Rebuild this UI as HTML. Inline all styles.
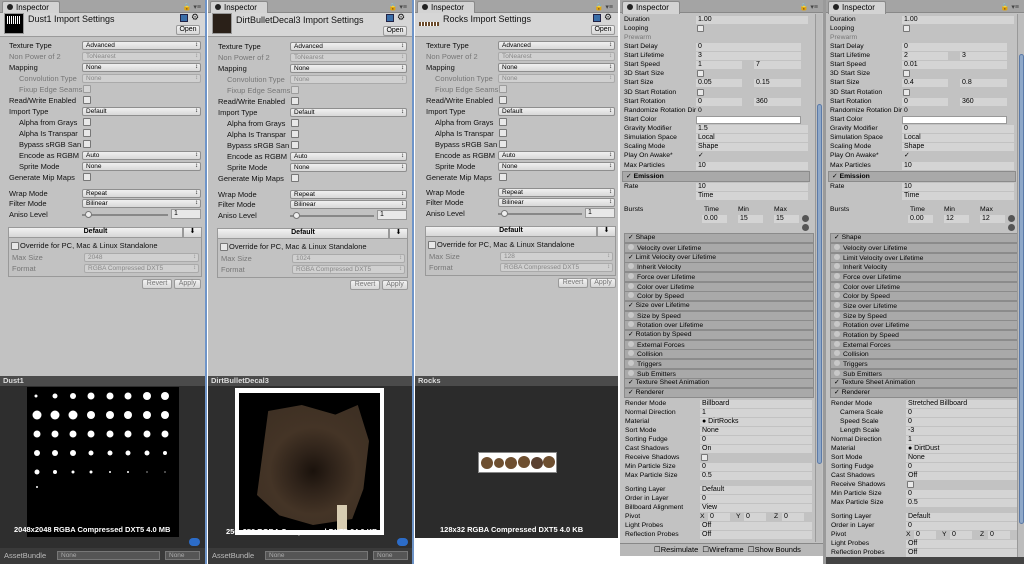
<!DOCTYPE html>
<html><head><meta charset="utf-8">
<style>
*{margin:0;padding:0;box-sizing:border-box}
body{width:1024px;height:564px;overflow:hidden;background:#fff;font-family:"Liberation Sans","DejaVu Sans",sans-serif;position:relative}
.p{position:absolute;top:0;height:564px;overflow:hidden;background:#c2c2c2}
.tb{position:absolute;left:0;top:0;right:0;height:13px;background:#a4a4a4;border-bottom:1px solid #888}
.tab{position:absolute;left:2px;top:1px;width:58px;height:13px;background:#d3d3d3;border:1px solid #8a8a8a;border-bottom:none;border-radius:2px 2px 0 0;font-size:8px;line-height:11px;padding-left:4px}
.tab b{display:inline-block;width:6px;height:6px;border-radius:50%;background:#222;margin-right:3px;vertical-align:-0px}
.lk{position:absolute;right:5px;top:3px;font-size:7px;color:#444}
.hd{position:absolute;left:0;right:0;top:13px;height:24px;background:#d6d6d6;border-bottom:1px solid #9a9a9a}
.l{position:absolute;font-size:7.5px;white-space:nowrap;color:#111;line-height:9px}
.g{color:#777}
.dd{position:absolute;height:9px;background:linear-gradient(#f0f0f0,#d8d8d8);border:1px solid #8e8e8e;border-radius:2px;font-size:6.5px;line-height:7px;padding-left:3px;white-space:nowrap}
.dd:after{content:"\2195";position:absolute;right:2px;top:0;font-size:6px}
.dg{color:#888;background:#d0d0d0;border-color:#aaa}
.cb{position:absolute;width:8px;height:8px;background:#e8e8e8;border:1px solid #777;border-radius:1px}
.f{position:absolute;height:8px;background:#d4d4d4;font-size:7px;line-height:8px;padding-left:2px;white-space:nowrap}
.btn{position:absolute;height:10px;background:linear-gradient(#f2f2f2,#d6d6d6);border:1px solid #999;border-radius:2px;font-size:7px;line-height:8px;text-align:center}
.ph{position:absolute;left:0;right:0;top:376px;height:10px;background:#4b4b4b;color:#ddd;font-size:7.5px;font-weight:bold;line-height:10px;padding-left:3px}
.pv{position:absolute;left:0;right:0;top:386px;height:162px;background:#2e2e2e}
.ab{position:absolute;left:0;right:0;top:548px;height:16px;background:#3a3a3a;color:#bbb;font-size:7.5px;line-height:16px;padding-left:4px}
.abd{position:absolute;top:551px;height:9px;background:#555;border:1px solid #777;color:#aaa;font-size:6.5px;line-height:7px;padding-left:3px}
.cap{position:absolute;color:#fff;font-size:7.5px;font-weight:bold;white-space:nowrap}
.r{position:absolute;left:0;font-size:6.8px;line-height:8px;white-space:nowrap}
.m{position:absolute;left:4px;width:190px;height:10px;background:#a9a9a9;border:1px solid #8b8b8b;font-size:6.8px;line-height:8px;padding-left:3px;white-space:nowrap}
.m i{display:inline-block;width:6px;height:6px;border-radius:50%;background:#c8c8c8;margin-right:3px;font-style:normal}
.sb{position:absolute;width:7px;background:#bdbdbd;border-left:1px solid #999}
.th{position:absolute;left:1px;width:5px;background:#8fa8c8;border-radius:3px;border:1px solid #5b7aa8}
.blu{position:absolute;top:0;height:564px;width:2px;background:#6e94c8}
</style></head><body>

<!-- PANEL 1 -->
<div class="p" style="left:0;width:206px">
<div class="tb"><div class="tab"><b></b>Inspector</div><div class="lk">🔒 ▾≡</div></div>
<div class="hd"><div style="position:absolute;left:4px;top:0;width:20px;height:21px;background:#000;border:1px solid #999"><div style="margin:2px;height:8px;background:repeating-linear-gradient(90deg,#fff 0 1px,#000 1px 2px)"></div></div>
<div class="l" style="left:28px;top:1px;font-size:9px;line-height:11px">Dust1 Import Settings</div>
<div style="position:absolute;left:180px;top:1px;width:8px;height:8px;background:#3a6ea8;border:1px solid #224"></div><div class="l" style="left:191px;top:0;font-size:9px">⚙</div>
<div class="btn" style="left:176px;top:12px;width:24px">Open</div></div>
<div class="l" style="left:9px;top:41px">Texture Type</div><div class="dd" style="left:82px;top:41px;width:119px">Advanced</div>
<div class="l g" style="left:9px;top:52px">Non Power of 2</div><div class="dd dg" style="left:82px;top:52px;width:119px">ToNearest</div>
<div class="l" style="left:9px;top:63px">Mapping</div><div class="dd" style="left:82px;top:63px;width:119px">None</div>
<div class="l g" style="left:19px;top:74px">Convolution Type</div><div class="dd dg" style="left:82px;top:74px;width:119px">None</div>
<div class="l g" style="left:19px;top:85px">Fixup Edge Seams</div><div class="cb" style="left:83px;top:85px;opacity:.5"></div>
<div class="l" style="left:9px;top:96px">Read/Write Enabled</div><div class="cb" style="left:83px;top:96px"></div>
<div class="l" style="left:9px;top:107px">Import Type</div><div class="dd" style="left:82px;top:107px;width:119px">Default</div>
<div class="l" style="left:19px;top:118px">Alpha from Grays</div><div class="cb" style="left:83px;top:118px"></div>
<div class="l" style="left:19px;top:129px">Alpha Is Transpar</div><div class="cb" style="left:83px;top:129px"></div>
<div class="l" style="left:19px;top:140px">Bypass sRGB San</div><div class="cb" style="left:83px;top:140px"></div>
<div class="l" style="left:19px;top:151px">Encode as RGBM</div><div class="dd" style="left:82px;top:151px;width:119px">Auto</div>
<div class="l" style="left:19px;top:162px">Sprite Mode</div><div class="dd" style="left:82px;top:162px;width:119px">None</div>
<div class="l" style="left:9px;top:173px">Generate Mip Maps</div><div class="cb" style="left:83px;top:173px"></div>
<div class="l" style="left:9px;top:189px">Wrap Mode</div><div class="dd" style="left:82px;top:189px;width:119px">Repeat</div>
<div class="l" style="left:9px;top:199px">Filter Mode</div><div class="dd" style="left:82px;top:199px;width:119px">Bilinear</div>
<div class="l" style="left:9px;top:210px">Aniso Level</div><div style="position:absolute;left:82px;top:214px;width:86px;height:2px;background:#888"></div><div style="position:absolute;left:85px;top:211px;width:7px;height:7px;border-radius:50%;background:#eee;border:1px solid #777"></div><div class="f" style="left:171px;top:209px;width:30px;background:#e8e8e8;border:1px solid #999;height:10px">1</div>
<div style="position:absolute;left:8px;top:227px;width:194px;height:50px;border:1px solid #999"></div>
<div class="btn" style="left:8px;top:227px;width:175px;height:11px;border-radius:0;font-weight:bold">Default</div><div class="btn" style="left:183px;top:227px;width:19px;height:11px;border-radius:0">⬇</div>
<div class="cb" style="left:11px;top:242px"></div><div class="l" style="left:20px;top:241px">Override for PC, Mac &amp; Linux Standalone</div>
<div class="l g" style="left:12px;top:253px">Max Size</div><div class="dd dg" style="left:84px;top:253px;width:115px">2048</div>
<div class="l g" style="left:12px;top:264px">Format</div><div class="dd dg" style="left:84px;top:264px;width:115px">RGBA Compressed DXT5</div>
<div class="btn" style="left:142px;top:279px;width:30px;color:#777">Revert</div><div class="btn" style="left:174px;top:279px;width:27px;color:#777">Apply</div>
<div class="ph">Dust1</div>
<div class="pv"><div style="position:absolute;left:27px;top:1px;width:152px;height:150px;background:#000">
<svg width="152" height="150" fill="#fff">
<g><circle cx="9" cy="9" r="1.5"/><circle cx="28" cy="9" r="2.5"/><circle cx="46" cy="9" r="3"/><circle cx="64" cy="9" r="3.5"/><circle cx="83" cy="9" r="3.5"/><circle cx="101" cy="9" r="3.5"/><circle cx="120" cy="9" r="4"/><circle cx="138" cy="9" r="4"/></g>
<g><circle cx="10" cy="28" r="4.5"/><circle cx="28" cy="28" r="4.5"/><circle cx="46" cy="28" r="4.5"/><circle cx="64" cy="28" r="4"/><circle cx="83" cy="28" r="4"/><circle cx="101" cy="28" r="4"/><circle cx="120" cy="28" r="4"/><circle cx="138" cy="28" r="4"/></g>
<g><circle cx="10" cy="47" r="3.5"/><circle cx="28" cy="47" r="3.5"/><circle cx="46" cy="47" r="3.5"/><circle cx="64" cy="47" r="3.5"/><circle cx="83" cy="47" r="3.5"/><circle cx="101" cy="47" r="3.5"/><circle cx="120" cy="47" r="3.5"/><circle cx="138" cy="47" r="3.5"/></g>
<g><circle cx="10" cy="66" r="3"/><circle cx="28" cy="66" r="3"/><circle cx="46" cy="66" r="3"/><circle cx="64" cy="66" r="2.5"/><circle cx="83" cy="66" r="2.5"/><circle cx="101" cy="66" r="2.5"/><circle cx="120" cy="66" r="2.5"/><circle cx="138" cy="66" r="2"/></g>
<g><circle cx="10" cy="85" r="2.5"/><circle cx="28" cy="85" r="2"/><circle cx="46" cy="85" r="1.5"/><circle cx="64" cy="85" r="1.5"/><circle cx="83" cy="85" r="1"/><circle cx="101" cy="85" r="1"/><circle cx="120" cy="85" r="0.6"/><circle cx="138" cy="85" r="0.6"/><circle cx="10" cy="100" r="1"/></g>
</svg></div>
<div class="cap" style="left:14px;top:139px">2048x2048  RGBA Compressed DXT5    4.0 MB</div>
<div style="position:absolute;left:189px;top:152px;width:11px;height:8px;border-radius:4px;background:#2c6cc8"></div></div>
<div class="ab">AssetBundle</div><div class="abd" style="left:57px;width:103px">None</div><div class="abd" style="left:165px;width:35px">None</div>
</div>
<div class="blu" style="left:205px"></div>

<!-- PANEL 2 -->
<div class="p" style="left:208px;width:204px">
<div class="tb"><div class="tab"><b></b>Inspector</div><div class="lk">🔒 ▾≡</div></div>
<div class="hd"><div style="position:absolute;left:4px;top:0;width:20px;height:21px;background:#2a2018;border:1px solid #999"></div>
<div class="l" style="left:28px;top:2px;font-size:9px;line-height:11px">DirtBulletDecal3 Import Settings</div>
<div style="position:absolute;left:178px;top:1px;width:8px;height:8px;background:#3a6ea8;border:1px solid #224"></div><div class="l" style="left:189px;top:0;font-size:9px">⚙</div>
<div class="btn" style="left:175px;top:13px;width:24px">Open</div></div>
<div class="l" style="left:10px;top:42px">Texture Type</div><div class="dd" style="left:82px;top:42px;width:117px">Advanced</div>
<div class="l g" style="left:10px;top:53px">Non Power of 2</div><div class="dd dg" style="left:82px;top:53px;width:117px">ToNearest</div>
<div class="l" style="left:10px;top:64px">Mapping</div><div class="dd" style="left:82px;top:64px;width:117px">None</div>
<div class="l g" style="left:19px;top:75px">Convolution Type</div><div class="dd dg" style="left:82px;top:75px;width:117px">None</div>
<div class="l g" style="left:19px;top:86px">Fixup Edge Seams</div><div class="cb" style="left:83px;top:86px;opacity:.5"></div>
<div class="l" style="left:10px;top:97px">Read/Write Enabled</div><div class="cb" style="left:83px;top:97px"></div>
<div class="l" style="left:10px;top:108px">Import Type</div><div class="dd" style="left:82px;top:108px;width:117px">Default</div>
<div class="l" style="left:19px;top:119px">Alpha from Grays</div><div class="cb" style="left:83px;top:119px"></div>
<div class="l" style="left:19px;top:130px">Alpha Is Transpar</div><div class="cb" style="left:83px;top:130px"></div>
<div class="l" style="left:19px;top:141px">Bypass sRGB San</div><div class="cb" style="left:83px;top:141px"></div>
<div class="l" style="left:19px;top:152px">Encode as RGBM</div><div class="dd" style="left:82px;top:152px;width:117px">Auto</div>
<div class="l" style="left:19px;top:163px">Sprite Mode</div><div class="dd" style="left:82px;top:163px;width:117px">None</div>
<div class="l" style="left:10px;top:174px">Generate Mip Maps</div><div class="cb" style="left:83px;top:174px"></div>
<div class="l" style="left:10px;top:190px">Wrap Mode</div><div class="dd" style="left:82px;top:190px;width:117px">Repeat</div>
<div class="l" style="left:10px;top:200px">Filter Mode</div><div class="dd" style="left:82px;top:200px;width:117px">Bilinear</div>
<div class="l" style="left:10px;top:211px">Aniso Level</div><div style="position:absolute;left:82px;top:215px;width:84px;height:2px;background:#888"></div><div style="position:absolute;left:85px;top:212px;width:7px;height:7px;border-radius:50%;background:#eee;border:1px solid #777"></div><div class="f" style="left:169px;top:210px;width:30px;background:#e8e8e8;border:1px solid #999;height:10px">1</div>
<div style="position:absolute;left:9px;top:228px;width:191px;height:50px;border:1px solid #999"></div>
<div class="btn" style="left:9px;top:228px;width:172px;height:11px;border-radius:0;font-weight:bold">Default</div><div class="btn" style="left:181px;top:228px;width:19px;height:11px;border-radius:0">⬇</div>
<div class="cb" style="left:12px;top:243px"></div><div class="l" style="left:21px;top:242px">Override for PC, Mac &amp; Linux Standalone</div>
<div class="l g" style="left:13px;top:254px">Max Size</div><div class="dd dg" style="left:84px;top:254px;width:113px">1024</div>
<div class="l g" style="left:13px;top:265px">Format</div><div class="dd dg" style="left:84px;top:265px;width:113px">RGBA Compressed DXT5</div>
<div class="btn" style="left:142px;top:280px;width:30px;color:#777">Revert</div><div class="btn" style="left:174px;top:280px;width:26px;color:#777">Apply</div>
<div class="ph">DirtBulletDecal3</div>
<div class="pv"><div style="position:absolute;left:27px;top:2px;width:149px;height:147px;background:#fff"><div style="position:absolute;left:4px;top:5px;width:141px;height:137px;background:#000"><div style="position:absolute;left:18px;top:12px;width:112px;height:120px;background:radial-gradient(circle at 50% 55%,#1a120c 0,#2e2219 22%,#443426 50%,#3b2e22 100%);clip-path:polygon(10% 5%,40% 0,70% 8%,90% 0,100% 30%,95% 70%,85% 95%,50% 100%,20% 92%,0 75%,5% 40%)"></div><div style="position:absolute;left:98px;top:112px;width:10px;height:25px;background:#d8cdb2"></div></div></div>
<div class="cap" style="left:18px;top:141px">256x256  RGBA Compressed DXT5    64.0 KB</div>
<div style="position:absolute;left:189px;top:152px;width:11px;height:8px;border-radius:4px;background:#2c6cc8"></div></div>
<div class="ab">AssetBundle</div><div class="abd" style="left:57px;width:103px">None</div><div class="abd" style="left:165px;width:35px">None</div>
</div>
<div class="blu" style="left:412px"></div>

<!-- PANEL 3 -->
<div class="p" style="left:415px;width:203px;height:538px">
<div class="tb"><div class="tab"><b></b>Inspector</div><div class="lk">🔒 ▾≡</div></div>
<div class="hd"><div style="position:absolute;left:4px;top:9px;width:20px;height:4px;background:repeating-linear-gradient(90deg,#6b4a2a 0 2px,#fff 2px 3px)"></div>
<div class="l" style="left:28px;top:1px;font-size:9px;line-height:11px">Rocks Import Settings</div>
<div style="position:absolute;left:178px;top:1px;width:8px;height:8px;background:#3a6ea8;border:1px solid #224"></div><div class="l" style="left:189px;top:0;font-size:9px">⚙</div>
<div class="btn" style="left:176px;top:12px;width:24px">Open</div></div>
<div class="l" style="left:11px;top:41px">Texture Type</div><div class="dd" style="left:83px;top:41px;width:117px">Advanced</div>
<div class="l g" style="left:11px;top:52px">Non Power of 2</div><div class="dd dg" style="left:83px;top:52px;width:117px">ToNearest</div>
<div class="l" style="left:11px;top:63px">Mapping</div><div class="dd" style="left:83px;top:63px;width:117px">None</div>
<div class="l g" style="left:20px;top:74px">Convolution Type</div><div class="dd dg" style="left:83px;top:74px;width:117px">None</div>
<div class="l g" style="left:20px;top:85px">Fixup Edge Seams</div><div class="cb" style="left:84px;top:85px;opacity:.5"></div>
<div class="l" style="left:11px;top:96px">Read/Write Enabled</div><div class="cb" style="left:84px;top:96px"></div>
<div class="l" style="left:11px;top:107px">Import Type</div><div class="dd" style="left:83px;top:107px;width:117px">Default</div>
<div class="l" style="left:20px;top:118px">Alpha from Grays</div><div class="cb" style="left:84px;top:118px"></div>
<div class="l" style="left:20px;top:129px">Alpha Is Transpar</div><div class="cb" style="left:84px;top:129px"></div>
<div class="l" style="left:20px;top:140px">Bypass sRGB San</div><div class="cb" style="left:84px;top:140px"></div>
<div class="l" style="left:20px;top:151px">Encode as RGBM</div><div class="dd" style="left:83px;top:151px;width:117px">Auto</div>
<div class="l" style="left:20px;top:162px">Sprite Mode</div><div class="dd" style="left:83px;top:162px;width:117px">None</div>
<div class="l" style="left:11px;top:173px">Generate Mip Maps</div><div class="cb" style="left:84px;top:173px"></div>
<div class="l" style="left:11px;top:188px">Wrap Mode</div><div class="dd" style="left:83px;top:188px;width:117px">Repeat</div>
<div class="l" style="left:11px;top:198px">Filter Mode</div><div class="dd" style="left:83px;top:198px;width:117px">Bilinear</div>
<div class="l" style="left:11px;top:209px">Aniso Level</div><div style="position:absolute;left:83px;top:213px;width:84px;height:2px;background:#888"></div><div style="position:absolute;left:86px;top:210px;width:7px;height:7px;border-radius:50%;background:#eee;border:1px solid #777"></div><div class="f" style="left:170px;top:208px;width:30px;background:#e8e8e8;border:1px solid #999;height:10px">1</div>
<div style="position:absolute;left:10px;top:226px;width:191px;height:50px;border:1px solid #999"></div>
<div class="btn" style="left:10px;top:226px;width:172px;height:11px;border-radius:0;font-weight:bold">Default</div><div class="btn" style="left:182px;top:226px;width:19px;height:11px;border-radius:0">⬇</div>
<div class="cb" style="left:13px;top:241px"></div><div class="l" style="left:22px;top:240px">Override for PC, Mac &amp; Linux Standalone</div>
<div class="l g" style="left:14px;top:252px">Max Size</div><div class="dd dg" style="left:85px;top:252px;width:113px">128</div>
<div class="l g" style="left:14px;top:263px">Format</div><div class="dd dg" style="left:85px;top:263px;width:113px">RGBA Compressed DXT5</div>
<div class="btn" style="left:143px;top:278px;width:30px;color:#777">Revert</div><div class="btn" style="left:175px;top:278px;width:26px;color:#777">Apply</div>
<div class="ph">Rocks</div>
<div class="pv" style="height:152px;background:#2b2b2b"><div style="position:absolute;left:63px;top:66px;width:79px;height:21px;background:#fff;border:1px solid #888">
<svg width="77" height="19"><g fill="#6e4f30"><circle cx="8" cy="10" r="6"/><circle cx="20" cy="10" r="5"/><circle cx="32" cy="10" r="6"/><circle cx="45" cy="9" r="6"/><circle cx="58" cy="10" r="6" fill="#5a4030"/><circle cx="70" cy="9" r="6"/></g></svg></div>
<div class="cap" style="left:25px;top:139px">128x32  RGBA Compressed DXT5    4.0 KB</div></div>
</div>

<!-- PANEL 4 particle -->
<div class="p" style="left:620px;width:203px;height:556px">
<div class="tb"><div class="tab"><b></b>Inspector</div><div class="lk">🔒 ▾≡</div></div>
<div style="position:absolute;left:4px;top:15px;width:186px;height:541px">
<div class="r" style="top:1px">Duration</div><div class="f" style="left:72px;top:1px;width:112px">1.00</div>
<div class="r" style="top:10px">Looping</div><div class="cb" style="left:73px;top:10px;width:7px;height:7px"></div>
<div class="r g" style="top:19px">Prewarm</div>
<div class="r" style="top:28px">Start Delay</div><div class="f" style="left:72px;top:28px;width:105px">0</div>
<div class="r" style="top:37px">Start Lifetime</div><div class="f" style="left:72px;top:37px;width:105px">3</div>
<div class="r" style="top:46px">Start Speed</div><div class="f" style="left:72px;top:46px;width:46px">1</div><div class="f" style="left:130px;top:46px;width:47px">7</div>
<div class="r" style="top:55px">3D Start Size</div><div class="cb" style="left:73px;top:55px;width:7px;height:7px"></div>
<div class="r" style="top:64px">Start Size</div><div class="f" style="left:72px;top:64px;width:46px">0.05</div><div class="f" style="left:130px;top:64px;width:47px">0.15</div>
<div class="r" style="top:74px">3D Start Rotation</div><div class="cb" style="left:73px;top:74px;width:7px;height:7px"></div>
<div class="r" style="top:83px">Start Rotation</div><div class="f" style="left:72px;top:83px;width:46px">0</div><div class="f" style="left:130px;top:83px;width:47px">360</div>
<div class="r" style="top:92px">Randomize Rotation Dir 0</div>
<div class="r" style="top:101px">Start Color</div><div class="f" style="left:72px;top:101px;width:105px;background:#fff;border:1px solid #999"></div>
<div class="r" style="top:110px">Gravity Modifier</div><div class="f" style="left:72px;top:110px;width:112px">1.5</div>
<div class="r" style="top:119px">Simulation Space</div><div class="f" style="left:72px;top:119px;width:112px">Local</div>
<div class="r" style="top:128px">Scaling Mode</div><div class="f" style="left:72px;top:128px;width:112px">Shape</div>
<div class="r" style="top:137px">Play On Awake*</div><div class="r" style="left:74px;top:137px">✓</div>
<div class="r" style="top:147px">Max Particles</div><div class="f" style="left:72px;top:147px;width:112px">10</div>
<div class="m" style="left:-2px;top:156px;width:188px;height:11px;line-height:9px;font-weight:bold">✓ Emission</div>
<div class="r" style="top:168px">Rate</div><div class="f" style="left:72px;top:168px;width:112px">10</div>
<div class="f" style="left:72px;top:177px;width:112px">Time</div>
<div class="r" style="top:191px">Bursts</div><div class="r" style="left:80px;top:191px">Time</div><div class="r" style="left:114px;top:191px">Min</div><div class="r" style="left:150px;top:191px">Max</div>
<div class="f" style="left:78px;top:200px;width:25px">0.00</div><div class="f" style="left:114px;top:200px;width:25px">15</div><div class="f" style="left:150px;top:200px;width:25px">15</div>
<div style="position:absolute;left:178px;top:200px;width:7px;height:7px;border-radius:50%;background:#555"></div><div style="position:absolute;left:178px;top:209px;width:7px;height:7px;border-radius:50%;background:#555"></div>
</div>
<div class="m" style="top:233px"><span>✓ </span>Shape</div>
<div class="m" style="top:243px"><i></i>Velocity over Lifetime</div>
<div class="m" style="top:253px">✓ Limit Velocity over Lifetime</div>
<div class="m" style="top:262px"><i></i>Inherit Velocity</div>
<div class="m" style="top:272px"><i></i>Force over Lifetime</div>
<div class="m" style="top:282px"><i></i>Color over Lifetime</div>
<div class="m" style="top:291px"><i></i>Color by Speed</div>
<div class="m" style="top:301px">✓ Size over Lifetime</div>
<div class="m" style="top:311px"><i></i>Size by Speed</div>
<div class="m" style="top:320px"><i></i>Rotation over Lifetime</div>
<div class="m" style="top:330px">✓ Rotation by Speed</div>
<div class="m" style="top:340px"><i></i>External Forces</div>
<div class="m" style="top:349px"><i></i>Collision</div>
<div class="m" style="top:359px"><i></i>Triggers</div>
<div class="m" style="top:369px"><i></i>Sub Emitters</div>
<div class="m" style="top:378px">✓ Texture Sheet Animation</div>
<div class="m" style="top:388px">✓ Renderer</div>
<div style="position:absolute;left:4px;top:398px;width:190px">
<div class="r" style="left:1px;top:2px">Render Mode</div><div class="f" style="left:76px;top:2px;width:112px">Billboard</div>
<div class="r" style="left:1px;top:11px">Normal Direction</div><div class="f" style="left:76px;top:11px;width:112px">1</div>
<div class="r" style="left:1px;top:20px">Material</div><div class="f" style="left:76px;top:20px;width:112px">● DirtRocks</div>
<div class="r" style="left:1px;top:29px">Sort Mode</div><div class="f" style="left:76px;top:29px;width:112px">None</div>
<div class="r" style="left:1px;top:38px">Sorting Fudge</div><div class="f" style="left:76px;top:38px;width:112px">0</div>
<div class="r" style="left:1px;top:47px">Cast Shadows</div><div class="f" style="left:76px;top:47px;width:112px">On</div>
<div class="r" style="left:1px;top:56px">Receive Shadows</div><div class="cb" style="left:77px;top:56px;width:7px;height:7px"></div>
<div class="r" style="left:1px;top:65px">Min Particle Size</div><div class="f" style="left:76px;top:65px;width:112px">0</div>
<div class="r" style="left:1px;top:74px">Max Particle Size</div><div class="f" style="left:76px;top:74px;width:112px">0.5</div>
<div class="r" style="left:1px;top:88px">Sorting Layer</div><div class="f" style="left:76px;top:88px;width:112px">Default</div>
<div class="r" style="left:1px;top:97px">Order in Layer</div><div class="f" style="left:76px;top:97px;width:112px">0</div>
<div class="r" style="left:1px;top:106px">Billboard Alignment</div><div class="f" style="left:76px;top:106px;width:112px">View</div>
<div class="r" style="left:1px;top:115px">Pivot</div><div class="r" style="left:76px;top:115px">X</div><div class="f" style="left:84px;top:115px;width:22px">0</div><div class="r" style="left:112px;top:115px">Y</div><div class="f" style="left:120px;top:115px;width:22px">0</div><div class="r" style="left:150px;top:115px">Z</div><div class="f" style="left:158px;top:115px;width:22px">0</div>
<div class="r" style="left:1px;top:124px">Light Probes</div><div class="f" style="left:76px;top:124px;width:112px">Off</div>
<div class="r" style="left:1px;top:133px">Reflection Probes</div><div class="f" style="left:76px;top:133px;width:112px">Off</div>
</div>
<div style="position:absolute;left:0;top:543px;width:203px;height:13px;background:#b8b8b8;border-top:1px solid #888;font-size:7.5px;line-height:12px;white-space:nowrap;padding-left:34px">☐Resimulate &nbsp;☐Wireframe &nbsp;☐Show Bounds</div>
<div class="sb" style="left:195px;top:14px;height:528px"><div class="th" style="top:90px;height:360px"></div></div>
</div>

<!-- PANEL 5 particle -->
<div class="p" style="left:826px;width:198px">
<div class="tb"><div class="tab"><b></b>Inspector</div><div class="lk">🔒 ▾≡</div></div>
<div style="position:absolute;left:4px;top:15px;width:186px;height:541px">
<div class="r" style="top:1px">Duration</div><div class="f" style="left:72px;top:1px;width:112px">1.00</div>
<div class="r" style="top:10px">Looping</div><div class="cb" style="left:73px;top:10px;width:7px;height:7px"></div>
<div class="r g" style="top:19px">Prewarm</div>
<div class="r" style="top:28px">Start Delay</div><div class="f" style="left:72px;top:28px;width:105px">0</div>
<div class="r" style="top:37px">Start Lifetime</div><div class="f" style="left:72px;top:37px;width:46px">2</div><div class="f" style="left:130px;top:37px;width:47px">3</div>
<div class="r" style="top:46px">Start Speed</div><div class="f" style="left:72px;top:46px;width:105px">0.01</div>
<div class="r" style="top:55px">3D Start Size</div><div class="cb" style="left:73px;top:55px;width:7px;height:7px"></div>
<div class="r" style="top:64px">Start Size</div><div class="f" style="left:72px;top:64px;width:46px">0.4</div><div class="f" style="left:130px;top:64px;width:47px">0.8</div>
<div class="r" style="top:74px">3D Start Rotation</div><div class="cb" style="left:73px;top:74px;width:7px;height:7px"></div>
<div class="r" style="top:83px">Start Rotation</div><div class="f" style="left:72px;top:83px;width:46px">0</div><div class="f" style="left:130px;top:83px;width:47px">360</div>
<div class="r" style="top:92px">Randomize Rotation Dir 0</div>
<div class="r" style="top:101px">Start Color</div><div class="f" style="left:72px;top:101px;width:105px;background:#fff;border:1px solid #999"></div>
<div class="r" style="top:110px">Gravity Modifier</div><div class="f" style="left:72px;top:110px;width:112px">0</div>
<div class="r" style="top:119px">Simulation Space</div><div class="f" style="left:72px;top:119px;width:112px">Local</div>
<div class="r" style="top:128px">Scaling Mode</div><div class="f" style="left:72px;top:128px;width:112px">Shape</div>
<div class="r" style="top:137px">Play On Awake*</div><div class="r" style="left:74px;top:137px">✓</div>
<div class="r" style="top:147px">Max Particles</div><div class="f" style="left:72px;top:147px;width:112px">10</div>
<div class="m" style="left:-2px;top:156px;width:188px;height:11px;line-height:9px;font-weight:bold">✓ Emission</div>
<div class="r" style="top:168px">Rate</div><div class="f" style="left:72px;top:168px;width:112px">10</div>
<div class="f" style="left:72px;top:177px;width:112px">Time</div>
<div class="r" style="top:191px">Bursts</div><div class="r" style="left:80px;top:191px">Time</div><div class="r" style="left:114px;top:191px">Min</div><div class="r" style="left:150px;top:191px">Max</div>
<div class="f" style="left:78px;top:200px;width:25px">0.00</div><div class="f" style="left:114px;top:200px;width:25px">12</div><div class="f" style="left:150px;top:200px;width:25px">12</div>
<div style="position:absolute;left:178px;top:200px;width:7px;height:7px;border-radius:50%;background:#555"></div><div style="position:absolute;left:178px;top:209px;width:7px;height:7px;border-radius:50%;background:#555"></div>
</div>
<div class="m" style="top:233px">✓ Shape</div>
<div class="m" style="top:243px"><i></i>Velocity over Lifetime</div>
<div class="m" style="top:253px"><i></i>Limit Velocity over Lifetime</div>
<div class="m" style="top:262px"><i></i>Inherit Velocity</div>
<div class="m" style="top:272px"><i></i>Force over Lifetime</div>
<div class="m" style="top:282px"><i></i>Color over Lifetime</div>
<div class="m" style="top:291px"><i></i>Color by Speed</div>
<div class="m" style="top:301px"><i></i>Size over Lifetime</div>
<div class="m" style="top:311px"><i></i>Size by Speed</div>
<div class="m" style="top:320px"><i></i>Rotation over Lifetime</div>
<div class="m" style="top:330px"><i></i>Rotation by Speed</div>
<div class="m" style="top:340px"><i></i>External Forces</div>
<div class="m" style="top:349px"><i></i>Collision</div>
<div class="m" style="top:359px"><i></i>Triggers</div>
<div class="m" style="top:369px"><i></i>Sub Emitters</div>
<div class="m" style="top:378px">✓ Texture Sheet Animation</div>
<div class="m" style="top:388px">✓ Renderer</div>
<div style="position:absolute;left:4px;top:398px;width:190px">
<div class="r" style="left:1px;top:2px">Render Mode</div><div class="f" style="left:76px;top:2px;width:112px">Stretched Billboard</div>
<div class="r" style="left:10px;top:11px">Camera Scale</div><div class="f" style="left:76px;top:11px;width:112px">0</div>
<div class="r" style="left:10px;top:20px">Speed Scale</div><div class="f" style="left:76px;top:20px;width:112px">0</div>
<div class="r" style="left:10px;top:29px">Length Scale</div><div class="f" style="left:76px;top:29px;width:112px">-3</div>
<div class="r" style="left:1px;top:38px">Normal Direction</div><div class="f" style="left:76px;top:38px;width:112px">1</div>
<div class="r" style="left:1px;top:47px">Material</div><div class="f" style="left:76px;top:47px;width:112px">● DirtDust</div>
<div class="r" style="left:1px;top:56px">Sort Mode</div><div class="f" style="left:76px;top:56px;width:112px">None</div>
<div class="r" style="left:1px;top:65px">Sorting Fudge</div><div class="f" style="left:76px;top:65px;width:112px">0</div>
<div class="r" style="left:1px;top:74px">Cast Shadows</div><div class="f" style="left:76px;top:74px;width:112px">Off</div>
<div class="r" style="left:1px;top:83px">Receive Shadows</div><div class="cb" style="left:77px;top:83px;width:7px;height:7px"></div>
<div class="r" style="left:1px;top:92px">Min Particle Size</div><div class="f" style="left:76px;top:92px;width:112px">0</div>
<div class="r" style="left:1px;top:101px">Max Particle Size</div><div class="f" style="left:76px;top:101px;width:112px">0.5</div>
<div class="r" style="left:1px;top:115px">Sorting Layer</div><div class="f" style="left:76px;top:115px;width:112px">Default</div>
<div class="r" style="left:1px;top:124px">Order in Layer</div><div class="f" style="left:76px;top:124px;width:112px">0</div>
<div class="r" style="left:1px;top:133px">Pivot</div><div class="r" style="left:76px;top:133px">X</div><div class="f" style="left:84px;top:133px;width:22px">0</div><div class="r" style="left:112px;top:133px">Y</div><div class="f" style="left:120px;top:133px;width:22px">0</div><div class="r" style="left:150px;top:133px">Z</div><div class="f" style="left:158px;top:133px;width:22px">0</div>
<div class="r" style="left:1px;top:142px">Light Probes</div><div class="f" style="left:76px;top:142px;width:112px">Off</div>
<div class="r" style="left:1px;top:151px">Reflection Probes</div><div class="f" style="left:76px;top:151px;width:112px">Off</div>
</div>
<div style="position:absolute;left:0;top:557px;width:198px;height:7px;background:#444"></div>
<div class="sb" style="left:191px;top:14px;height:543px"><div class="th" style="top:40px;height:470px"></div></div>
</div>
<div style="position:absolute;left:823px;top:0;width:3px;height:564px;background:#9a9a9a"></div>
</body></html>
